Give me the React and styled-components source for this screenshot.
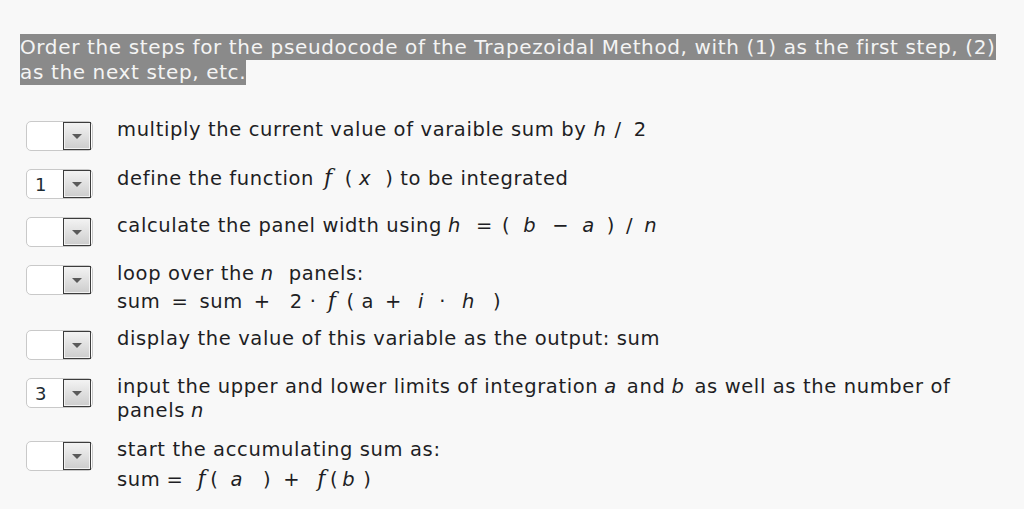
import styled, { createGlobalStyle } from "styled-components";

const GlobalStyle = createGlobalStyle`
  html, body {
    margin: 0;
    padding: 0;
    background: #f8f8f8;
  }
  body {
    font-family: "DejaVu Sans", Verdana, sans-serif;
    color: #1e1e24;
  }
`;

const Page = styled.div`
  padding: 35px 20px 20px 26px;
  width: 1024px;
  box-sizing: border-box;
`;

const Prompt = styled.p`
  margin: 0 0 0 -6px;
  width: 978px;
  font-size: 20px;
  line-height: 24.5px;
  letter-spacing: 0.63px;

  span {
    background: #8a8a8a;
    color: #f4f4f4;
    padding: 1px 0 1px;
  }
`;

const List = styled.div`
  display: flex;
  flex-direction: column;
  gap: 15px;
  margin-top: 34px;
`;

const Row = styled.div`
  display: flex;
  align-items: flex-start;
  margin-top: ${(p) => p.$shift || 0}px;
`;

const Select = styled.div`
  flex: none;
  display: flex;
  align-items: center;
  justify-content: space-between;
  width: 67px;
  height: 30px;
  margin-top: 3px;
  box-sizing: border-box;
  border: 1px solid #c9c9c9;
  border-radius: 5px;
  background: #fff;
  padding: 0 1px 0 8px;
`;

const Value = styled.span`
  font-family: "DejaVu Sans", Verdana, sans-serif;
  font-size: 18px;
  color: #1d2b33;
`;

const Arrow = styled.div`
  width: 28px;
  height: 28px;
  box-sizing: border-box;
  border: 1px solid #3c3c3c;
  box-shadow: inset 0 0 0 1px #f2f2f2;
  background: linear-gradient(#f3f3f3, #cdcdcd);
  display: flex;
  align-items: center;
  justify-content: center;

  &::after {
    content: "";
    border-left: 5px solid transparent;
    border-right: 5px solid transparent;
    border-top: 5px solid #5a5a5a;
    margin-top: 1px;
  }
`;

const Text = styled.div`
  margin-left: 24px;
  font-size: 19.5px;
  letter-spacing: 0.63px;
`;

const Line = styled.div`
  line-height: ${(p) => p.$h || 24}px;
  white-space: nowrap;
`;

const Var = styled.i`
  font-family: "DejaVu Sans", sans-serif;
  font-style: italic;
  margin: 0 ${(p) => p.$r ?? 12}px 0 ${(p) => p.$l ?? 4}px;
`;

const Fn = styled.i`
  font-family: "DejaVu Serif", serif;
  font-style: italic;
  font-size: 22px;
  margin: 0 ${(p) => p.$r ?? 4}px 0 ${(p) => p.$l ?? 6}px;
`;

const Op = styled.span`
  margin: 0 ${(p) => p.$r ?? p.$m ?? 10}px 0 ${(p) => p.$m ?? 10}px;
`;

function Box({ value }) {
  return (
    <Select>
      <Value>{value}</Value>
      <Arrow />
    </Select>
  );
}

export default function App() {
  return (
    <>
      <GlobalStyle />
      <Page>
        <Prompt>
          <span>
            Order the steps for the pseudocode of the Trapezoidal Method, with
            (1) as the first step, (2) as the next step, etc.
          </span>
        </Prompt>
        <List>
          <Row>
            <Box />
            <Text>
              <Line>
                multiply the current value of varaible sum by
                <Var $l={7} $r={8}>h</Var>/<Op $m={6} />2
              </Line>
            </Text>
          </Row>
          <Row>
            <Box value="1" />
            <Text>
              <Line>
                define the function<Fn $l={10} $r={12}>f</Fn>(
                <Var $l={6} $r={14}>x</Var>) to be integrated
              </Line>
            </Text>
          </Row>
          <Row>
            <Box />
            <Text>
              <Line>
                calculate the panel width using<Var $l={6} $r={6}>h</Var>
                <Op $m={9}>=</Op>(<Var $l={13} $r={6}>b</Var>
                <Op>−</Op>
                <Var $l={3} $r={12}>a</Var>)<Op $m={11}>/</Op>
                <Var $l={0} $r={0}>n</Var>
              </Line>
            </Text>
          </Row>
          <Row>
            <Box />
            <Text>
              <Line>
                loop over the<Var $l={6} $r={15}>n</Var>panels:
              </Line>
              <Line $h={29}>
                sum<Op $m={11}>=</Op>sum<Op $m={11} $r={19}>+</Op>2
                <Op $m={7}>·</Op>
                <Fn $l={4} $r={10}>f</Fn>( a<Op $m={11}>+</Op>
                <Var $l={5} $r={15}>i</Var>·<Var $l={16} $r={18}>h</Var>)
              </Line>
            </Text>
          </Row>
          <Row $shift={-4}>
            <Box />
            <Text>
              <Line>display the value of this variable as the output: sum</Line>
            </Text>
          </Row>
          <Row>
            <Box value="3" />
            <Text>
              <Line>
                input the upper and lower limits of integration
                <Var $l={6} $r={10}>a</Var>and<Var $l={6} $r={10}>b</Var>as
                well as the number of
              </Line>
              <Line>
                panels<Var $l={6} $r={0}>n</Var>
              </Line>
            </Text>
          </Row>
          <Row>
            <Box />
            <Text>
              <Line>start the accumulating sum as:</Line>
              <Line $h={33}>
                sum<Op $m={6}>=</Op>
                <Fn $l={8} $r={4}>f</Fn>(<Var $l={12} $r={20}>a</Var>)
                <Op $m={12}>+</Op>
                <Fn $l={5} $r={4}>f</Fn>(<Var $l={4} $r={8}>b</Var>)
              </Line>
            </Text>
          </Row>
        </List>
      </Page>
    </>
  );
}
